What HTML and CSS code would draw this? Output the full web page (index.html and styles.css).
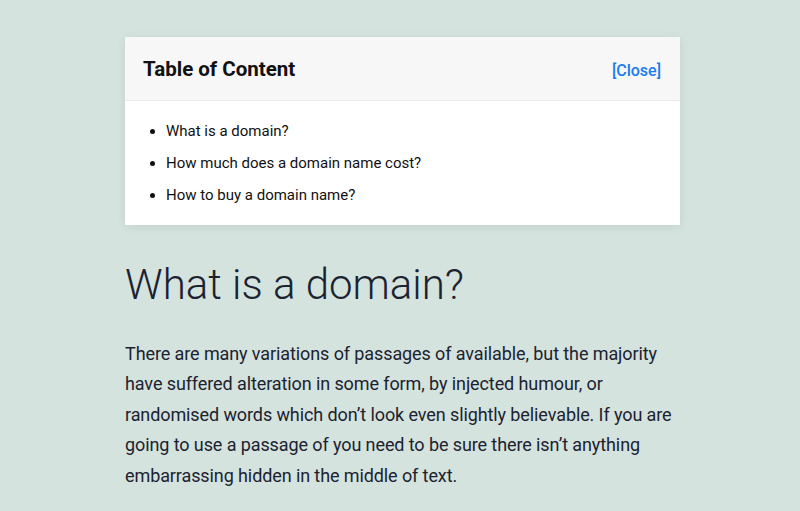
FILE: index.html
```html
<!DOCTYPE html>
<html lang="en">
<head>
    <meta charset="UTF-8">
    <meta name="viewport" content="width=device-width, initial-scale=1.0">
    <title>Table of Content</title>
    <link rel="stylesheet" href="styles.css">
</head>
<body>
    <div class="page">
        <div class="toc">
            <div class="toc-header">
                <h3 class="toc-title">Table of Content</h3>
                <a href="#" class="toc-close">[Close]</a>
            </div>
            <ul class="toc-list">
                <li><a href="#domain">What is a domain?</a></li>
                <li><a href="#cost">How much does a domain name cost?</a></li>
                <li><a href="#buy">How to buy a domain name?</a></li>
            </ul>
        </div>

        <h1 id="domain" class="heading">What is a domain?</h1>
        <p class="text">There are many variations of passages of available, but the majority have suffered alteration in some form, by injected humour, or randomised words which don’t look even slightly believable. If you are going to use a passage of you need to be sure there isn’t anything embarrassing hidden in the middle of text.</p>
    </div>
</body>
</html>
```

FILE: styles.css
```css
body {
    margin: 0;
    padding: 37px 0 0 5px;
    font-family: Roboto, "Liberation Sans", sans-serif;
    background-color: #d4e3dd;
    color: #1c2230;
}
.page {
    width: 555px;
    margin: 0 auto;
}
.toc {
    background-color: #fff;
    box-shadow: 0 2px 10px rgba(0, 0, 0, 0.08);
}
.toc-header {
    display: flex;
    align-items: center;
    justify-content: space-between;
    height: 63px;
    padding: 0 19px 0 18px;
    background-color: #f7f7f7;
    border-bottom: 1px solid #ebebeb;
}
.toc-title {
    margin: 0;
    font-size: 20.5px;
    font-weight: 700;
    color: #111;
}
.toc-close {
    font-size: 16px;
    font-weight: 500;
    color: #1a7cf0;
    text-decoration: none;
    padding-top: 3px;
}
.toc-list {
    margin: 0;
    padding: 14px 0 14px 41px;
    list-style: disc;
}
.toc-list li {
    font-size: 15px;
    line-height: 32px;
    color: #111;
}
.toc-list a {
    color: #111;
    text-decoration: none;
}
.heading {
    margin: 30px 0 0;
    font-size: 42px;
    font-weight: 300;
    line-height: 60px;
}
.text {
    margin: 24px 0 0;
    font-size: 18px;
    line-height: 30.4px;
    letter-spacing: -0.1px;
}
```
